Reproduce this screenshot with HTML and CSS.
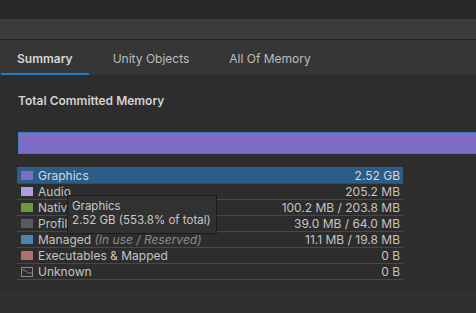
FILE: index.html
```html
<!DOCTYPE html>
<html lang="en">
<head>
  <meta charset="UTF-8">
  <title>Memory Profiler - Summary</title>
  <link rel="stylesheet" href="styles.css">
</head>
<body>
  <div class="topbar"></div>
  <div class="toolbar"></div>

  <div class="tabs">
    <div class="tab active">Summary</div>
    <div class="tab">Unity Objects</div>
    <div class="tab">All Of Memory</div>
  </div>

  <div class="content">
    <h2 class="title">Total Committed Memory</h2>
    <div class="bar"></div>

    <div class="table">
      <div class="row selected">
        <span class="swatch graphics"></span>
        <span class="name">Graphics</span>
        <span class="value">2.52 GB</span>
      </div>
      <div class="row">
        <span class="swatch audio"></span>
        <span class="name">Audio</span>
        <span class="value">205.2 MB</span>
      </div>
      <div class="row">
        <span class="swatch native"></span>
        <span class="name">Native</span>
        <span class="value">100.2 MB / 203.8 MB</span>
      </div>
      <div class="row">
        <span class="swatch profiler"></span>
        <span class="name">Profiler</span>
        <span class="value">39.0 MB / 64.0 MB</span>
      </div>
      <div class="row">
        <span class="swatch managed"></span>
        <span class="name">Managed <em>(In use / Reserved)</em></span>
        <span class="value">11.1 MB / 19.8 MB</span>
      </div>
      <div class="row">
        <span class="swatch executables"></span>
        <span class="name">Executables &amp; Mapped</span>
        <span class="value">0 B</span>
      </div>
      <div class="row">
        <svg class="swatch-icon" width="12" height="10" viewBox="0 0 12 10">
          <rect x="0.5" y="0.5" width="11" height="9" fill="none" stroke="#8a8a8a"/>
          <path d="M1 3 C4 2 6 7 11 6" fill="none" stroke="#8a8a8a"/>
        </svg>
        <span class="name">Unknown</span>
        <span class="value">0 B</span>
      </div>

      <div class="tooltip">
        <div>Graphics</div>
        <div>2.52 GB (553.8% of total)</div>
      </div>
    </div>
  </div>
  <div class="footer"></div>
</body>
</html>
```

FILE: styles.css
```css
body {
  margin: 0;
  background: #2d2d2d;
  font-family: Inter, "Noto Sans", sans-serif;
  font-size: 12px;
  color: #c4c4c4;
  overflow: hidden;
  width: 476px;
  height: 313px;
}

.topbar {
  height: 19px;
  background: #282828;
}

.toolbar {
  height: 20px;
  background: #3c3c3c;
  border-bottom: 1px solid #232323;
}

.tabs {
  display: flex;
  gap: 8px;
  height: 35px;
  padding-left: 1px;
  background: #363636;
}

.tab {
  display: flex;
  align-items: center;
  padding: 4px 16px 0;
  border-bottom: 2px solid transparent;
  color: #bdbdbd;
  box-sizing: border-box;
  height: 35px;
}

.tab.active {
  color: #d6d6d6;
  font-weight: 600;
  border-bottom-color: #1a7fc8;
}

.content {
  padding: 0 0 0 17px;
  height: 215px;
}

.title {
  margin: 0;
  padding: 18px 0 0 1px;
  font-size: 12px;
  font-weight: 600;
  color: #d2d2d2;
  line-height: 15px;
}

.bar {
  margin: 24px 0 0 1px;
  height: 20px;
  background: #7f6cc4;
  border: 1px solid #3a7ec0;
  border-right: 0;
}

.table {
  position: relative;
  margin-top: 13px;
  width: 386px;
  border-top: 1px solid #575757;
}

.row {
  display: flex;
  align-items: center;
  height: 15px;
  border-bottom: 1px solid #484848;
  padding: 0 3px 0 4px;
}

.row.selected {
  background: #2c5d87;
  color: #d0d8e0;
}

.swatch {
  width: 12px;
  height: 9px;
  margin-right: 5px;
}

.swatch-icon {
  margin-right: 5px;
}

.graphics { background: #7f6cc4; }
.audio { background: #b09ddf; }
.native { background: #6a9a3c; }
.profiler { background: #5b5b5b; }
.managed { background: #4a84b4; }
.executables { background: #b0706c; }

.name {
  flex: 1;
  white-space: nowrap;
}

.name em {
  color: #8c8c8c;
}

.value {
  text-align: right;
  white-space: nowrap;
}

.tooltip {
  position: absolute;
  left: 50px;
  top: 27px;
  width: 140px;
  height: 31px;
  padding: 3px 4px;
  background: #313131;
  border: 1px solid #1b1b1b;
  color: #c8c8c8;
  line-height: 14px;
  white-space: nowrap;
  font-size: 11.5px;
}

.footer {
  height: 30px;
  background: #303030;
}
```
